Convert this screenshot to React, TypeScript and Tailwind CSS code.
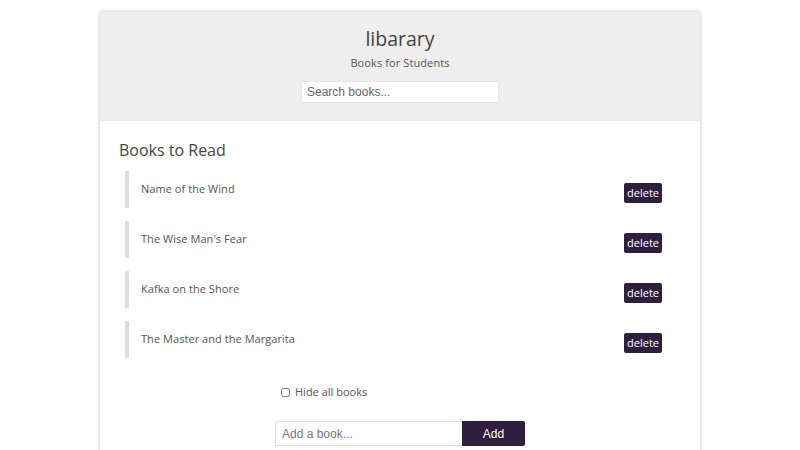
import React from "react";

const books = [
  "Name of the Wind",
  "The Wise Man's Fear",
  "Kafka on the Shore",
  "The Master and the Margarita",
];

export default function App() {
  return (
    <div className="w-[800px] h-[450px] overflow-hidden bg-white" style={{ fontFamily: '"Open Sans", "DejaVu Sans", sans-serif' }}>
      <div className="ml-[100px] mt-[12px] w-[600px] h-[460px] shadow-[0_0_4px_rgba(0,0,0,0.25)] flex flex-col">
        <div className="bg-[#eeeeee] h-[109px] flex flex-col items-center pt-[14px]">
          <div className="text-[19.5px] leading-[26px] text-[#444]">libarary</div>
          <div className="text-[11px] leading-[14px] mt-[4px] text-[#555] tracking-[0.1px]">Books for Students</div>
          <input
            className="mt-[11px] w-[198px] h-[22px] bg-white border border-[#e4e4e4] px-[5px] text-[12px] outline-none placeholder:text-[#666]"
            style={{ fontFamily: '"Liberation Sans", Arial, sans-serif' }}
            placeholder="Search books..."
          />
        </div>
        <div className="bg-white flex flex-col px-[19px] pt-[18px]">
          <div className="text-[16px] leading-[22px] text-[#444]">Books to Read</div>
          <ul className="mt-[10px] ml-[6px] mr-[19px] flex flex-col gap-[13px]">
            {books.map((b) => (
              <li key={b} className="h-[37px] border-l-[4px] border-[#dddddd] pl-[12px] flex items-start justify-between">
                <span className="text-[11px] leading-[14px] mt-[11px] text-[#555] tracking-[0.05px]">{b}</span>
                <button className="mt-[12px] h-[20px] px-[3px] bg-[#2d1f3d] text-white text-[11px] leading-[20px] rounded-[2px]">
                  delete
                </button>
              </li>
            ))}
          </ul>
          <div className="mt-[27px] ml-[162px] flex items-center gap-[5px]">
            <input type="checkbox" className="w-[9px] h-[9px] m-0" />
            <span className="text-[11px] leading-[14px] text-[#555]">Hide all books</span>
          </div>
          <div className="mt-[22px] ml-[156px] flex">
            <input
              className="w-[187px] h-[25px] border border-[#ddd] border-r-0 px-[6px] text-[12px] outline-none placeholder:text-[#777] rounded-l-[2px]"
              style={{ fontFamily: '"Liberation Sans", Arial, sans-serif' }}
              placeholder="Add a book..."
            />
            <button
              className="w-[63px] h-[25px] bg-[#2d1f3d] text-white text-[12px] rounded-r-[2px]"
              style={{ fontFamily: '"Liberation Sans", Arial, sans-serif' }}
            >
              Add
            </button>
          </div>
        </div>
      </div>
    </div>
  );
}
